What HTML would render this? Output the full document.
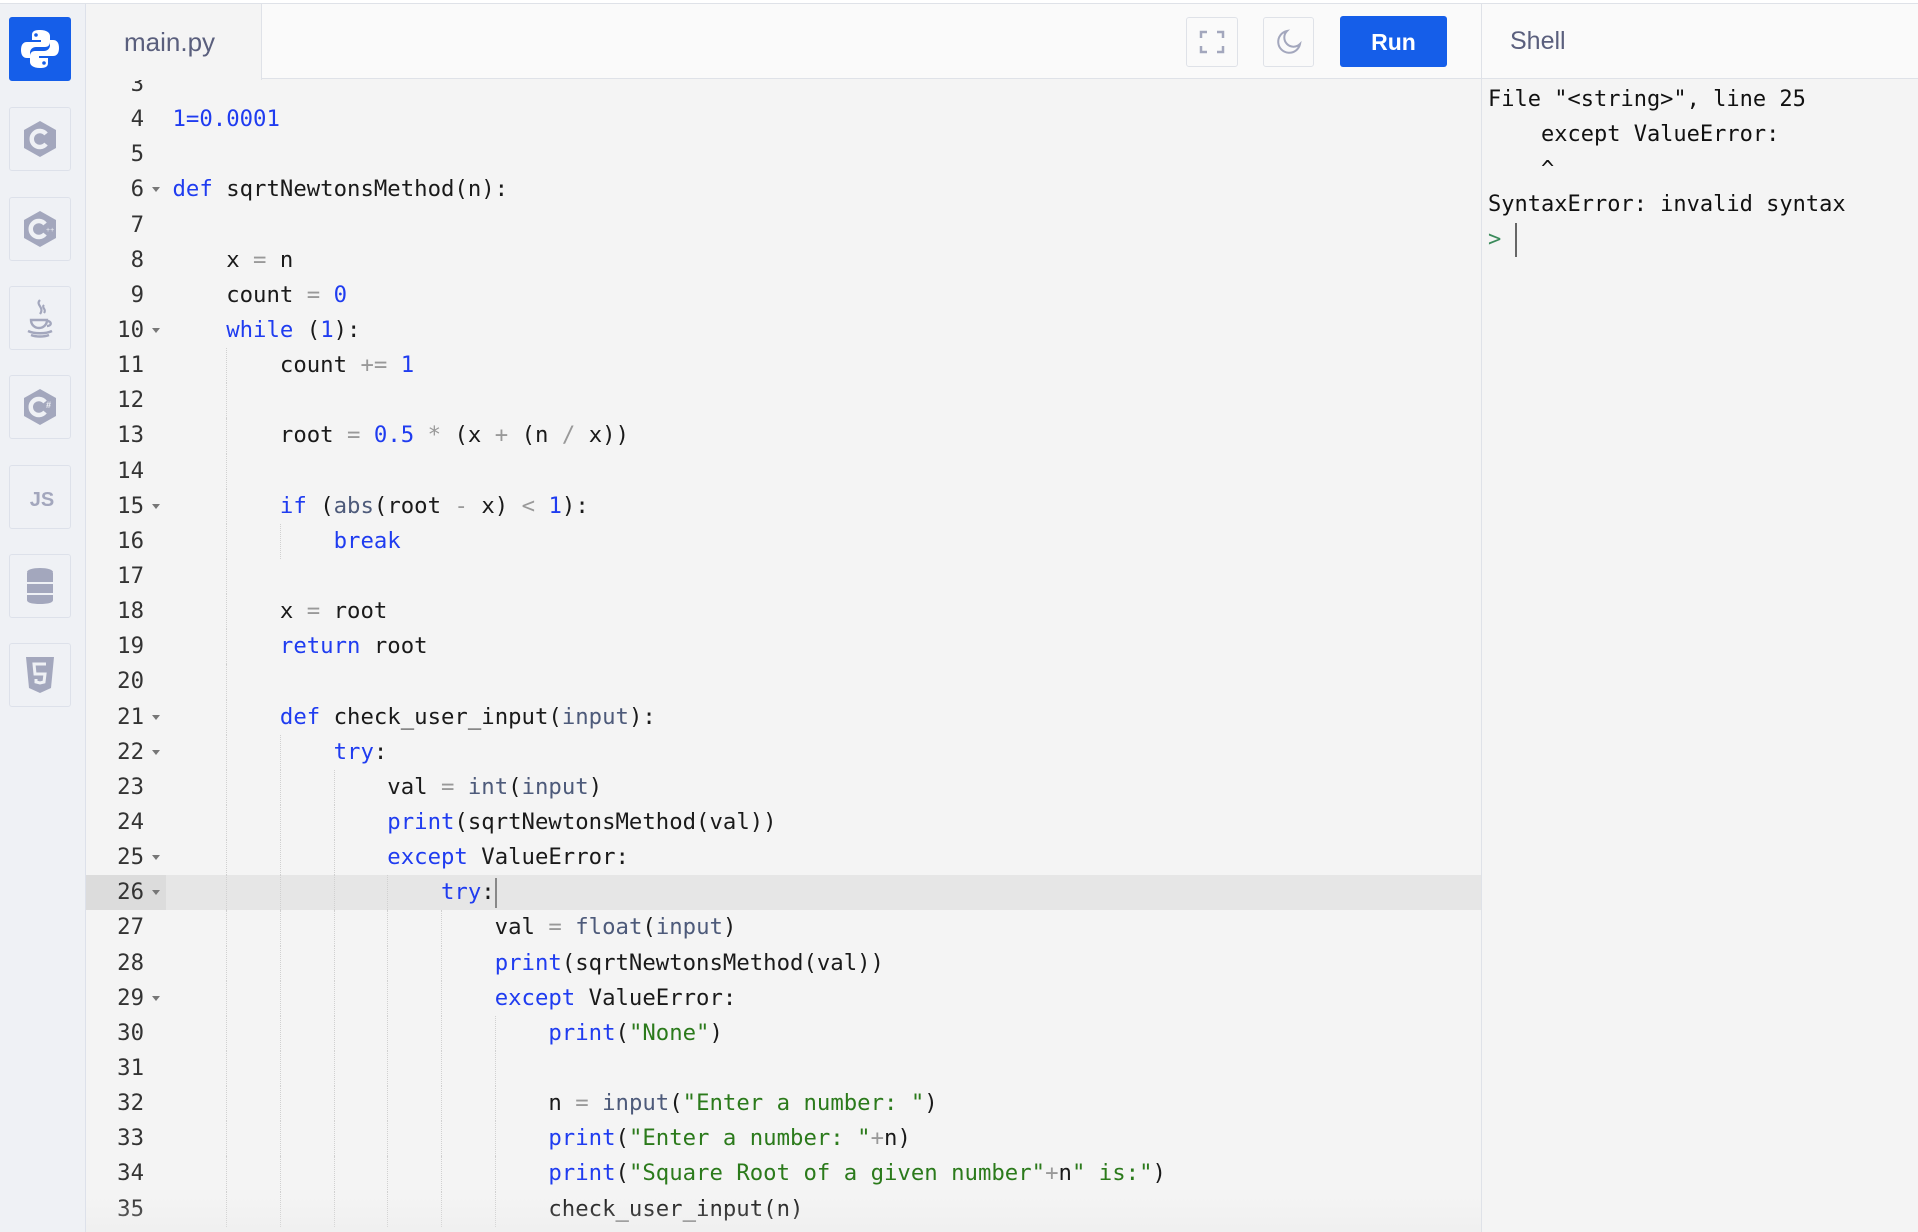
<!DOCTYPE html>
<html><head><meta charset="utf-8"><style>
*{margin:0;padding:0;box-sizing:border-box}
body{width:1918px;height:1232px;overflow:hidden;background:#f4f4f4;font-family:"Liberation Sans",sans-serif;position:relative}
.topline{position:absolute;left:0;top:0;width:1918px;height:4px;background:#fff;border-bottom:1px solid #dfe2e8}
.side{position:absolute;left:0;top:4px;width:86px;height:1228px;background:#eff1f5;border-right:1px solid #dde1ea}
.sb{position:absolute;left:9px;width:62px;height:64px;border:1px solid #dde1ea;border-radius:3px;display:flex;align-items:center;justify-content:center;color:#a3a7bd}
.sb.on{background:#155ee9;border-color:#155ee9}
.header{position:absolute;left:86px;top:4px;width:1832px;height:75px;background:#fafafa;border-bottom:1px solid #dfe2e8}
.tab{position:absolute;left:86px;top:4px;width:176px;height:76px;background:#f4f4f4;border-right:1px solid #dfe2e8;font-size:26px;color:#5a5f7d;padding:23px 0 0 38px}
.btn{position:absolute;top:17px;height:50px;border:1px solid #dfe2e8;border-radius:3px;background:#fafafa;display:flex;align-items:center;justify-content:center}
.run{position:absolute;left:1340px;top:16px;width:107px;height:51px;background:#155ee9;border-radius:3px;color:#fff;font-size:23px;font-weight:bold;display:flex;align-items:center;justify-content:center;padding-top:2px}
.vdiv{position:absolute;left:1481px;top:4px;width:1px;height:1228px;background:#dfe2e8}
.shelltitle{position:absolute;left:1510px;top:27px;font-size:25px;color:#5a5f7d}
.shell{position:absolute;left:1488px;top:82px;font-family:"DejaVu Sans Mono",monospace;font-size:22px;line-height:35px;color:#111;white-space:pre}
.editor{position:absolute;left:86px;top:80px;width:1395px;height:1152px;overflow:hidden}
.lines{position:absolute;left:0;top:-13px;width:1395px;font-family:"DejaVu Sans Mono",monospace;font-size:22.3px}
.l{height:35.15px;line-height:35.15px;position:relative;white-space:pre;color:#1a1a1a}
.l.hl{background:#e6e6e6}
.l.hl .n{background:#dcdcdc}
.n{position:absolute;left:0;top:0;width:80px;height:35.15px;text-align:right;padding-right:22px;color:#333;box-sizing:border-box}
.f{position:absolute;left:66px;top:15px;width:0;height:0;border-left:4px solid transparent;border-right:4px solid transparent;border-top:5px solid #777}
.c{position:absolute;left:86.5px;top:0}
.g{position:absolute;top:0;width:0;height:35.15px;border-left:1px dotted #d0d0d0}
.k{color:#1f3cf0}.s{color:#2b7a1b}.o{color:#999}.b{color:#4d5a7a}
.cur{display:inline-block;width:2px;height:30px;background:#888;vertical-align:middle}
.fade{position:absolute;left:86px;top:1195px;width:1395px;height:37px;background:linear-gradient(rgba(244,244,244,0),rgba(232,232,232,.35))}
</style></head><body>
<div class="topline"></div>
<div class="side">
 <div class="sb on" style="top:13px"><svg width="40" height="42" viewBox="0 0 40 42"><path d="M20 2c-8 0-8 3-8 6v4h9v2H7c-4 0-6 3-6 8s2 8 6 8h3v-5c0-4 3-6 6-6h9c3 0 5-2 5-5V8c0-3-3-6-10-6z" fill="#fff"/><path d="M20 40c8 0 8-3 8-6v-4h-9v-2h14c4 0 6-3 6-8s-2-8-6-8h-3v5c0 4-3 6-6 6h-9c-3 0-5 2-5 5v6c0 3 3 6 10 6z" fill="#fff"/><circle cx="16" cy="7" r="1.8" fill="#155ee9"/><circle cx="24" cy="35" r="1.8" fill="#155ee9"/></svg></div>
 <div class="sb" style="top:103px"><svg width="34" height="38" viewBox="0 0 34 38"><path d="M17 1 33 10v18L17 37 1 28V10z" fill="#a3a7bd"/><path d="M23 14a8 8 0 1 0 0 10" stroke="#eff1f5" stroke-width="4.5" fill="none"/></svg></div>
 <div class="sb" style="top:193px"><svg width="34" height="38" viewBox="0 0 34 38"><path d="M17 1 33 10v18L17 37 1 28V10z" fill="#a3a7bd"/><path d="M22 14a8 8 0 1 0 0 10" stroke="#eff1f5" stroke-width="4.5" fill="none"/><text x="23" y="22" font-size="7" fill="#eff1f5">++</text></svg></div>
 <div class="sb" style="top:282px"><svg width="30" height="42" viewBox="0 0 30 42"><path d="M15 3c-5 5 5 7 0 14M19 8c-3 3 3 4 0 8" stroke="#a3a7bd" stroke-width="2.2" fill="none"/><path d="M6 23h16c0 5-4 8-8 8s-8-3-8-8zM22 24c5 0 5 5 0 5M3 34c6 3 18 3 24 0M6 38c5 2 13 2 18 0" stroke="#a3a7bd" stroke-width="2.4" fill="none"/></svg></div>
 <div class="sb" style="top:371px"><svg width="34" height="38" viewBox="0 0 34 38"><path d="M17 1 33 10v18L17 37 1 28V10z" fill="#a3a7bd"/><path d="M22 14a8 8 0 1 0 0 10" stroke="#eff1f5" stroke-width="4.5" fill="none"/><text x="23" y="20" font-size="9" font-weight="bold" fill="#eff1f5">#</text></svg></div>
 <div class="sb" style="top:461px;font-weight:bold;font-size:20px;padding-top:6px;padding-left:4px">JS</div>
 <div class="sb" style="top:550px"><svg width="30" height="38" viewBox="0 0 30 38"><ellipse cx="15" cy="5" rx="13" ry="4" fill="#a3a7bd"/><rect x="2" y="6" width="26" height="9" fill="#a3a7bd"/><rect x="2" y="17" width="26" height="9" fill="#a3a7bd"/><path d="M2 28h26v5c0 3-6 4-13 4S2 36 2 33z" fill="#a3a7bd"/></svg></div>
 <div class="sb" style="top:639px"><svg width="30" height="38" viewBox="0 0 30 38"><path d="M1 1h28l-3 31-11 5-11-5z" fill="#a3a7bd"/><path d="M21 8H9l1 10h10l-1 8-4 1-4-1v-3" stroke="#eff1f5" stroke-width="3" fill="none"/></svg></div>
</div>
<div class="header"></div>
<div class="tab">main.py</div>
<div class="btn" style="left:1186px;width:52px"><svg width="26" height="26" viewBox="0 0 26 26" fill="none" stroke="#a3a7bd" stroke-width="2.5"><path d="M2 9V3h6M18 3h6v6M24 17v6h-6M8 23H2v-6"/></svg></div>
<div class="btn" style="left:1263px;width:51px"><svg width="26" height="26" viewBox="0 0 26 26" fill="none" stroke="#a3a7bd" stroke-width="2"><path d="M11 2a11 11 0 1 0 13 13A9 9 0 0 1 11 2z"/></svg></div>
<div class="run">Run</div>
<div class="vdiv"></div>
<div class="shelltitle">Shell</div>
<div class="shell">File "&lt;string&gt;", line 25
    except ValueError:
    ^
SyntaxError: invalid syntax
<span style="color:#3a8a5a">&gt;</span> <span style="display:inline-block;width:2px;height:34px;background:#666;vertical-align:middle"></span></div>

<div class="editor"><div class="lines">
<div class="l"><span class="n">3</span></div>
<div class="l"><span class="n">4</span><span class="c k">1=0.0001</span></div>
<div class="l"><span class="n">5</span></div>
<div class="l"><span class="n">6</span><span class="f"></span><span class="c"><span class="k">def</span> sqrtNewtonsMethod(n):</span></div>
<div class="l"><span class="n">7</span></div>
<div class="l"><span class="n">8</span><span class="c">    x <span class="o">=</span> n</span></div>
<div class="l"><span class="n">9</span><span class="c">    count <span class="o">=</span> <span class="k">0</span></span></div>
<div class="l"><span class="n">10</span><span class="f"></span><span class="c">    <span class="k">while</span> (<span class="k">1</span>):</span></div>
<div class="l"><span class="n">11</span><i class="g" style="left:140px"></i><span class="c">        count <span class="o">+=</span> <span class="k">1</span></span></div>
<div class="l"><span class="n">12</span><i class="g" style="left:140px"></i></div>
<div class="l"><span class="n">13</span><i class="g" style="left:140px"></i><span class="c">        root <span class="o">=</span> <span class="k">0.5</span> <span class="o">*</span> (x <span class="o">+</span> (n <span class="o">/</span> x))</span></div>
<div class="l"><span class="n">14</span><i class="g" style="left:140px"></i></div>
<div class="l"><span class="n">15</span><span class="f"></span><i class="g" style="left:140px"></i><span class="c">        <span class="k">if</span> (<span class="b">abs</span>(root <span class="o">-</span> x) <span class="o">&lt;</span> <span class="k">1</span>):</span></div>
<div class="l"><span class="n">16</span><i class="g" style="left:140px"></i><i class="g" style="left:194px"></i><span class="c">            <span class="k">break</span></span></div>
<div class="l"><span class="n">17</span><i class="g" style="left:140px"></i></div>
<div class="l"><span class="n">18</span><i class="g" style="left:140px"></i><span class="c">        x <span class="o">=</span> root</span></div>
<div class="l"><span class="n">19</span><i class="g" style="left:140px"></i><span class="c">        <span class="k">return</span> root</span></div>
<div class="l"><span class="n">20</span><i class="g" style="left:140px"></i></div>
<div class="l"><span class="n">21</span><span class="f"></span><i class="g" style="left:140px"></i><span class="c">        <span class="k">def</span> check_user_input(<span class="b">input</span>):</span></div>
<div class="l"><span class="n">22</span><span class="f"></span><i class="g" style="left:140px"></i><i class="g" style="left:194px"></i><span class="c">            <span class="k">try</span>:</span></div>
<div class="l"><span class="n">23</span><i class="g" style="left:140px"></i><i class="g" style="left:194px"></i><i class="g" style="left:248px"></i><span class="c">                val <span class="o">=</span> <span class="b">int</span>(<span class="b">input</span>)</span></div>
<div class="l"><span class="n">24</span><i class="g" style="left:140px"></i><i class="g" style="left:194px"></i><i class="g" style="left:248px"></i><span class="c">                <span class="k">print</span>(sqrtNewtonsMethod(val))</span></div>
<div class="l"><span class="n">25</span><span class="f"></span><i class="g" style="left:140px"></i><i class="g" style="left:194px"></i><i class="g" style="left:248px"></i><span class="c">                <span class="k">except</span> ValueError:</span></div>
<div class="l hl"><span class="n">26</span><span class="f"></span><i class="g" style="left:140px"></i><i class="g" style="left:194px"></i><i class="g" style="left:248px"></i><i class="g" style="left:301px"></i><span class="c">                    <span class="k">try</span>:<span class="cur"></span></span></div>
<div class="l"><span class="n">27</span><i class="g" style="left:140px"></i><i class="g" style="left:194px"></i><i class="g" style="left:248px"></i><i class="g" style="left:301px"></i><i class="g" style="left:355px"></i><span class="c">                        val <span class="o">=</span> <span class="b">float</span>(<span class="b">input</span>)</span></div>
<div class="l"><span class="n">28</span><i class="g" style="left:140px"></i><i class="g" style="left:194px"></i><i class="g" style="left:248px"></i><i class="g" style="left:301px"></i><i class="g" style="left:355px"></i><span class="c">                        <span class="k">print</span>(sqrtNewtonsMethod(val))</span></div>
<div class="l"><span class="n">29</span><span class="f"></span><i class="g" style="left:140px"></i><i class="g" style="left:194px"></i><i class="g" style="left:248px"></i><i class="g" style="left:301px"></i><i class="g" style="left:355px"></i><span class="c">                        <span class="k">except</span> ValueError:</span></div>
<div class="l"><span class="n">30</span><i class="g" style="left:140px"></i><i class="g" style="left:194px"></i><i class="g" style="left:248px"></i><i class="g" style="left:301px"></i><i class="g" style="left:355px"></i><i class="g" style="left:409px"></i><span class="c">                            <span class="k">print</span>(<span class="s">"None"</span>)</span></div>
<div class="l"><span class="n">31</span><i class="g" style="left:140px"></i><i class="g" style="left:194px"></i><i class="g" style="left:248px"></i><i class="g" style="left:301px"></i><i class="g" style="left:355px"></i><i class="g" style="left:409px"></i></div>
<div class="l"><span class="n">32</span><i class="g" style="left:140px"></i><i class="g" style="left:194px"></i><i class="g" style="left:248px"></i><i class="g" style="left:301px"></i><i class="g" style="left:355px"></i><i class="g" style="left:409px"></i><span class="c">                            n <span class="o">=</span> <span class="b">input</span>(<span class="s">"Enter a number: "</span>)</span></div>
<div class="l"><span class="n">33</span><i class="g" style="left:140px"></i><i class="g" style="left:194px"></i><i class="g" style="left:248px"></i><i class="g" style="left:301px"></i><i class="g" style="left:355px"></i><i class="g" style="left:409px"></i><span class="c">                            <span class="k">print</span>(<span class="s">"Enter a number: "</span><span class="o">+</span>n)</span></div>
<div class="l"><span class="n">34</span><i class="g" style="left:140px"></i><i class="g" style="left:194px"></i><i class="g" style="left:248px"></i><i class="g" style="left:301px"></i><i class="g" style="left:355px"></i><i class="g" style="left:409px"></i><span class="c">                            <span class="k">print</span>(<span class="s">"Square Root of a given number"</span><span class="o">+</span>n<span class="s">" is:"</span>)</span></div>
<div class="l"><span class="n">35</span><i class="g" style="left:140px"></i><i class="g" style="left:194px"></i><i class="g" style="left:248px"></i><i class="g" style="left:301px"></i><i class="g" style="left:355px"></i><i class="g" style="left:409px"></i><span class="c">                            check_user_input(n)</span></div>
</div></div>
<div class="fade"></div>
</body></html>
